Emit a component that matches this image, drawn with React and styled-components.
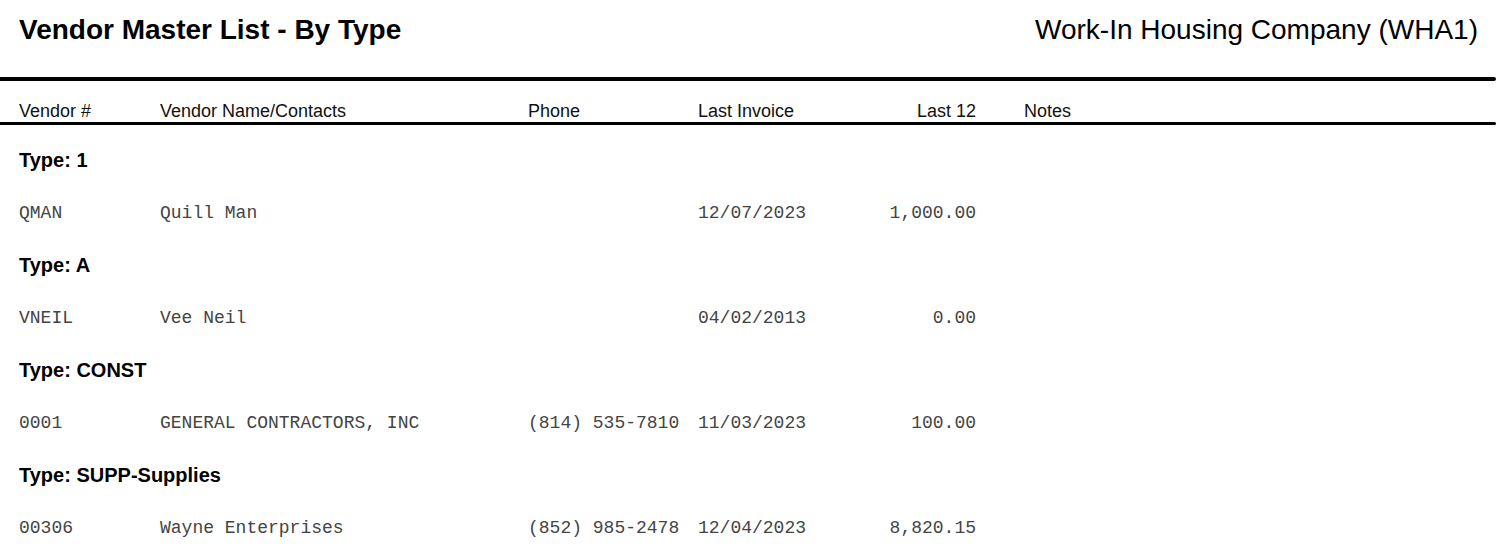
import React from "react";
import styled, { createGlobalStyle } from "styled-components";

const GlobalStyle = createGlobalStyle`
  html, body {
    margin: 0;
    padding: 0;
    background: #fff;
  }
  body {
    font-family: "Liberation Sans", Arial, sans-serif;
    color: #000;
  }
`;

const Page = styled.div`
  width: 1499px;
  overflow: hidden;
`;

const TitleBar = styled.div`
  display: flex;
  justify-content: space-between;
  align-items: flex-start;
  height: 60px;
  padding: 0 21px 0 19px;
  margin-bottom: 17px;
  font-size: 28px;
  line-height: 60px;
`;

const ReportTitle = styled.div`
  font-weight: 700;
`;

const Company = styled.div`
  font-weight: 400;
`;

const Rule = styled.div`
  width: 1496px;
  height: ${(p) => p.thickness}px;
  background: #000;
  border-radius: 0 ${(p) => p.thickness}px ${(p) => p.thickness}px 0;
`;

const Columns = styled.div`
  display: grid;
  grid-template-columns: 141px 368px 170px 170px 108px 1fr;
  padding-left: 19px;
`;

const HeaderRow = styled(Columns)`
  padding-top: 19px;
  font-size: 18px;
  line-height: 22px;
  color: #111;
`;

const Cell = styled.div`
  white-space: pre;
  text-align: ${(p) => (p.right ? "right" : "left")};
  padding-left: ${(p) => (p.notes ? "48px" : "0")};
`;

const Groups = styled.div`
  display: flex;
  flex-direction: column;
  gap: 28px;
  padding-top: 23px;
`;

const Group = styled.div`
  display: flex;
  flex-direction: column;
  gap: 29px;
`;

const GroupTitle = styled.div`
  padding-left: 19px;
  font-size: 20px;
  font-weight: 700;
  line-height: 24px;
`;

const DataRow = styled(Columns)`
  font-family: "Liberation Mono", "Courier New", monospace;
  font-size: 18px;
  line-height: 24px;
  color: #444;
`;

const groups = [
  {
    type: "1",
    rows: [{ id: "QMAN", name: "Quill Man", phone: "", date: "12/07/2023", amount: "1,000.00" }],
  },
  {
    type: "A",
    rows: [{ id: "VNEIL", name: "Vee Neil", phone: "", date: "04/02/2013", amount: "0.00" }],
  },
  {
    type: "CONST",
    rows: [
      {
        id: "0001",
        name: "GENERAL CONTRACTORS, INC",
        phone: "(814) 535-7810",
        date: "11/03/2023",
        amount: "100.00",
      },
    ],
  },
  {
    type: "SUPP-Supplies",
    rows: [
      {
        id: "00306",
        name: "Wayne Enterprises",
        phone: "(852) 985-2478",
        date: "12/04/2023",
        amount: "8,820.15",
      },
    ],
  },
];

const App = () => {
  return (
    <Page>
      <GlobalStyle />
      <TitleBar>
        <ReportTitle>Vendor Master List - By Type</ReportTitle>
        <Company>Work-In Housing Company (WHA1)</Company>
      </TitleBar>
      <Rule thickness={4} />
      <HeaderRow>
        <Cell>Vendor #</Cell>
        <Cell>Vendor Name/Contacts</Cell>
        <Cell>Phone</Cell>
        <Cell>Last Invoice</Cell>
        <Cell right>Last 12</Cell>
        <Cell notes>Notes</Cell>
      </HeaderRow>
      <Rule thickness={3} />
      <Groups>
        {groups.map((g) => (
          <Group key={g.type}>
            <GroupTitle>Type: {g.type}</GroupTitle>
            {g.rows.map((r) => (
              <DataRow key={r.id}>
                <Cell>{r.id}</Cell>
                <Cell>{r.name}</Cell>
                <Cell>{r.phone}</Cell>
                <Cell>{r.date}</Cell>
                <Cell right>{r.amount}</Cell>
                <Cell notes />
              </DataRow>
            ))}
          </Group>
        ))}
      </Groups>
    </Page>
  );
};

export default App;
